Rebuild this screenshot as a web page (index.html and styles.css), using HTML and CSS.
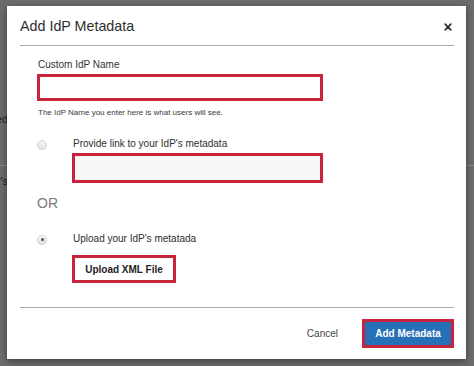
FILE: index.html
```html
<!DOCTYPE html>
<html lang="en">
<head>
    <meta charset="UTF-8">
    <meta name="viewport" content="width=device-width, initial-scale=1.0">
    <title>Add IdP Metadata</title>
    <link rel="stylesheet" href="styles.css">
</head>
<body>

    <!-- Halaman di belakang dialog (tertutup overlay) -->
    <div class="page">
        <div class="page-word">Saved</div>
        <div class="page-rule"></div>
        <div class="page-word page-word-2">IdP's</div>
    </div>

    <!-- Dialog -->
    <div class="modal">
        <div class="modal-header">
            <h1 class="modal-title">Add IdP Metadata</h1>
            <button class="close-btn" type="button" aria-label="Close">
                <svg width="8" height="8" viewBox="0 0 8 8">
                    <path d="M1.2 1.2 L6.8 6.8 M6.8 1.2 L1.2 6.8" stroke="#2b2b2b" stroke-width="1.7" stroke-linecap="round"/>
                </svg>
            </button>
        </div>

        <div class="modal-body">
            <label class="field-label" for="idp-name">Custom IdP Name</label>
            <input class="text-input name-input" type="text" id="idp-name">
            <p class="help-text">The IdP Name you enter here is what users will see.</p>

            <div class="option">
                <span class="radio"></span>
                <span class="option-text">Provide link to your IdP's metadata</span>
            </div>
            <input class="text-input link-input" type="text">

            <div class="or-text">OR</div>

            <div class="option option-2">
                <span class="radio radio-checked"></span>
                <span class="option-text">Upload your IdP's metatada</span>
            </div>
            <button class="upload-btn" type="button">Upload XML File</button>
        </div>

        <div class="modal-footer">
            <button class="cancel-btn" type="button">Cancel</button>
            <button class="primary-btn" type="button">Add Metadata</button>
        </div>
    </div>

</body>
</html>
```

FILE: styles.css
```css
body {
    font-family: "Liberation Sans", Arial, sans-serif;
    background-color: #6c6c6c;
    margin: 0;
    padding: 0;
    width: 474px;
    height: 366px;
    overflow: hidden;
    position: relative;
}

/* Halaman belakang */
.page {
    padding-top: 113px;
}

.page-word {
    margin-left: -23px;
    font-size: 11px;
    line-height: 12px;
    color: #1e1e1e;
}

.page-rule {
    margin-top: 40px;
    height: 1px;
    background-color: #8a8a8a;
}

.page-word-2 {
    margin-top: 9px;
    margin-left: -16px;
    font-size: 11px;
}

/* Dialog */
.modal {
    position: absolute;
    left: 7px;
    top: 6px;
    width: 459px;
    height: 353px;
    box-sizing: border-box;
    background-color: #fff;
    padding: 0 12px 0 13px;
    box-shadow: 0 2px 7px rgba(0, 0, 0, 0.45);
    color: #333;
}

.modal-header {
    display: flex;
    justify-content: space-between;
    align-items: center;
    padding: 11px 0 10px;
    border-bottom: 1px solid #a9a9a9;
}

.modal-title {
    margin: 0;
    font-size: 14.3px;
    line-height: 18px;
    font-weight: normal;
    color: #2e2e2e;
}

.close-btn {
    border: none;
    background: none;
    padding: 0;
    margin: 2px 2px 0 0;
    width: 8px;
    height: 8px;
    display: flex;
    cursor: pointer;
}

.modal-body {
    display: flex;
    flex-direction: column;
    align-items: flex-start;
    padding: 13px 0 24px 17px;
    border-bottom: 1px solid #a9a9a9;
}

.field-label {
    padding-left: 1px;
    font-size: 10px;
    line-height: 12px;
    color: #333;
}

.text-input {
    box-sizing: border-box;
    border: 3px solid #c7233a;
    margin: 0;
    padding: 0;
    outline: none;
}

.name-input {
    margin-top: 3px;
    width: 286px;
    height: 27px;
    background-color: #fff;
}

.help-text {
    margin: 7px 0 0 1px;
    font-size: 8px;
    line-height: 10px;
    color: #3a3a3a;
}

.option {
    margin-top: 20px;
    display: flex;
    align-items: center;
    height: 12px;
}

.option-2 {
    margin-top: 21px;
}

.radio {
    box-sizing: border-box;
    width: 10px;
    height: 10px;
    border-radius: 50%;
    border: 1px solid #d2d2d2;
    background: linear-gradient(#f7f7f7, #e0e0e0);
    display: flex;
    align-items: center;
    justify-content: center;
    margin-top: 1px;
}

.radio-checked::after {
    content: "";
    width: 3px;
    height: 3px;
    border-radius: 50%;
    background-color: #555;
}

.option-text {
    margin-left: 26px;
    font-size: 10px;
    line-height: 12px;
    color: #2e2e2e;
}

.link-input {
    margin: 3px 0 0 35px;
    width: 251px;
    height: 30px;
    background-color: #f8f6f6;
}

.or-text {
    margin-top: 11px;
    font-size: 14px;
    line-height: 18px;
    color: #7a7a7a;
}

.upload-btn {
    margin: 10px 0 0 35px;
    width: 104px;
    height: 28px;
    box-sizing: border-box;
    border: 3px solid #c7233a;
    background-color: #fff;
    font-family: "Liberation Sans", Arial, sans-serif;
    font-size: 10px;
    font-weight: bold;
    color: #222;
    padding: 0;
    cursor: pointer;
}

.modal-footer {
    display: flex;
    justify-content: flex-end;
    align-items: center;
    gap: 24px;
    padding: 11px 0 11px;
}

.cancel-btn {
    border: none;
    background: none;
    padding: 0;
    font-family: "Liberation Sans", Arial, sans-serif;
    font-size: 10px;
    color: #444;
    cursor: pointer;
}

.primary-btn {
    width: 92px;
    height: 29px;
    box-sizing: border-box;
    border: 3px solid #c7233a;
    background-color: #2670b7;
    color: #fff;
    font-family: "Liberation Sans", Arial, sans-serif;
    font-size: 10px;
    font-weight: bold;
    padding: 0;
    cursor: pointer;
}
```
